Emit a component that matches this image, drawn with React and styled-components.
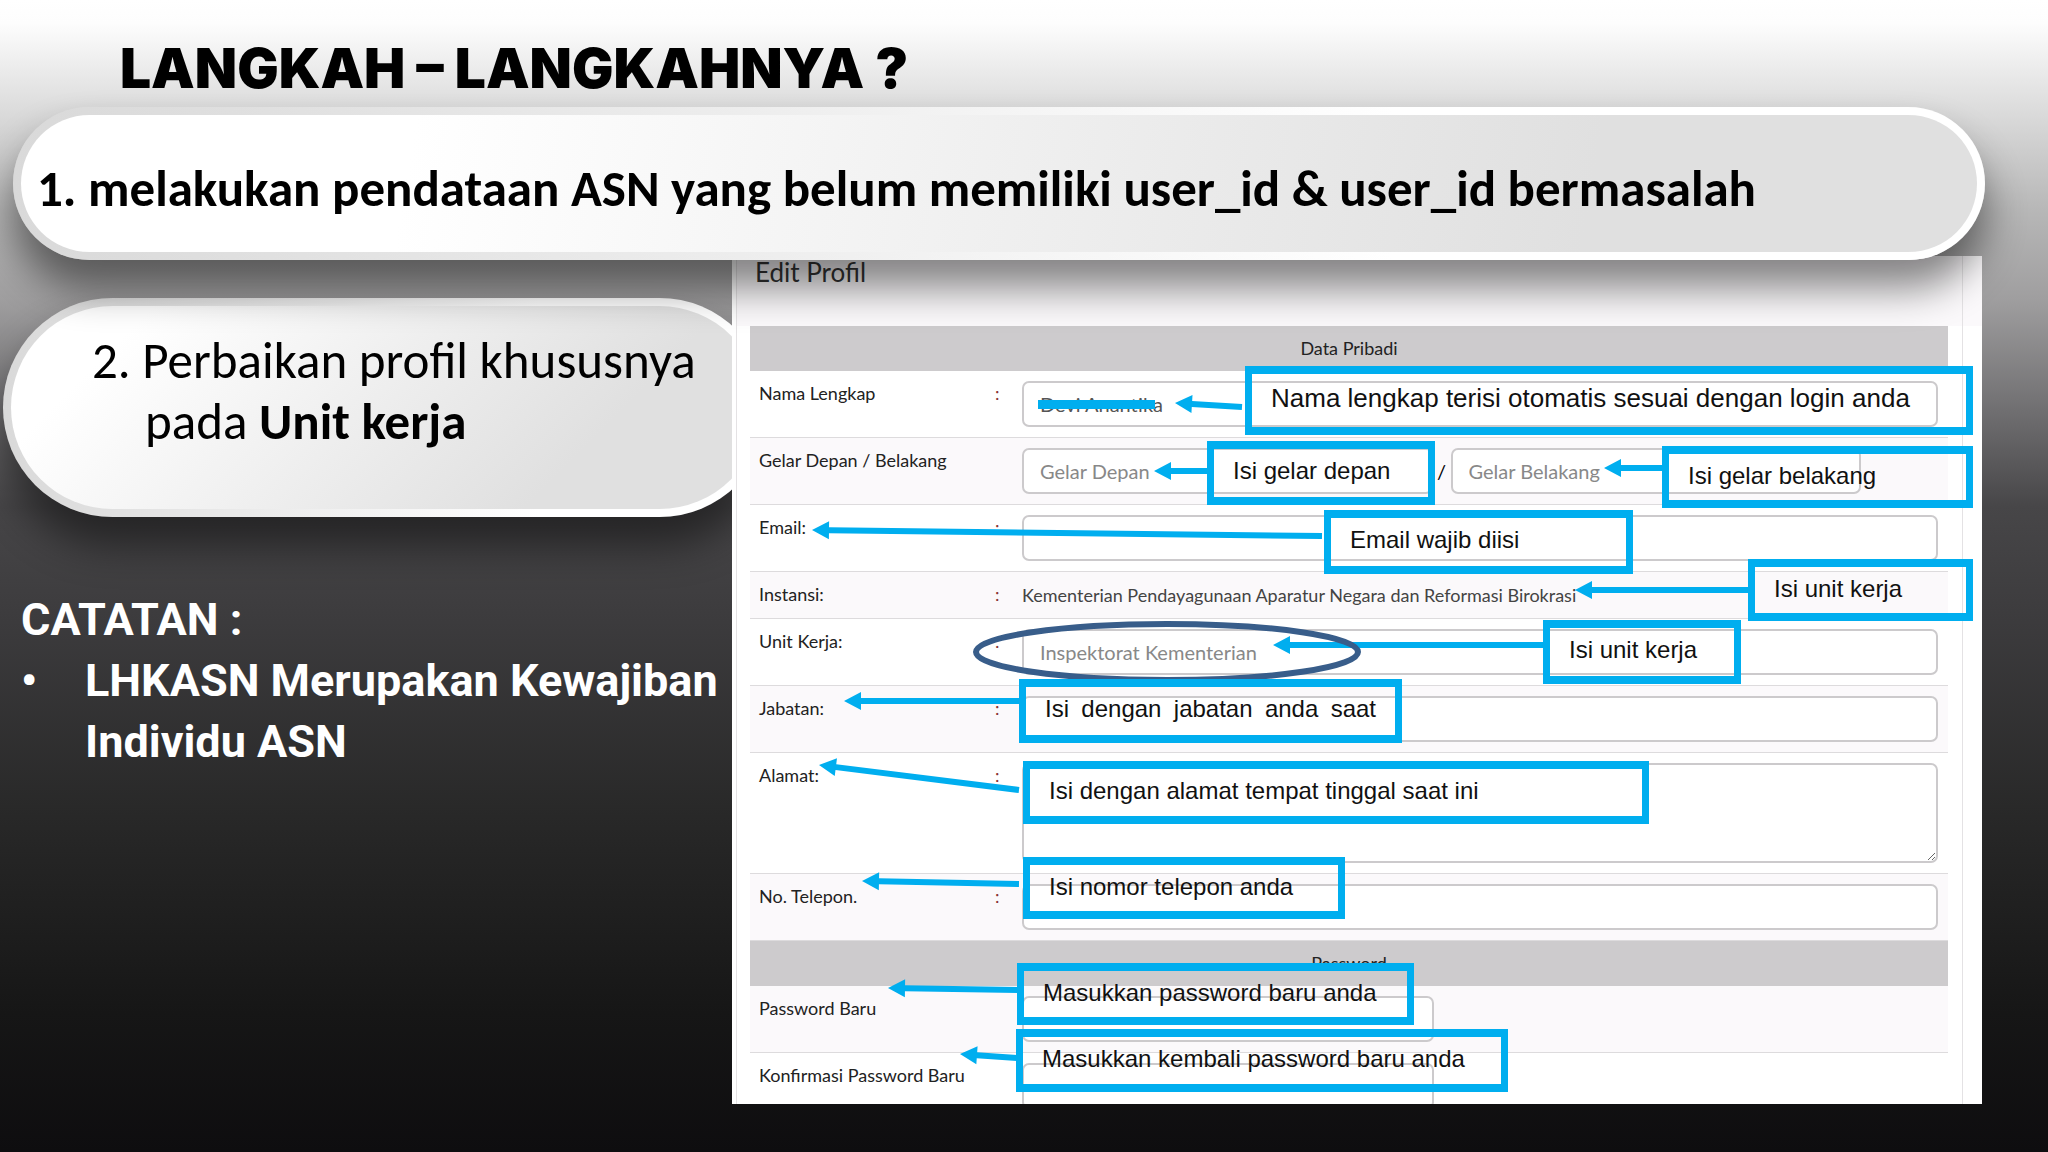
import React from 'react';
import styled, { createGlobalStyle } from 'styled-components';

const notes = [
  { text: 'Nama lengkap terisi otomatis sesuai dengan login anda', x: 513, y: 110, w: 728, h: 69, large: true },
  { text: 'Isi gelar depan', x: 475, y: 185, w: 228, h: 64 },
  { text: 'Isi gelar belakang', x: 930, y: 190, w: 311, h: 62 },
  { text: 'Email wajib diisi', x: 592, y: 254, w: 309, h: 64 },
  { text: 'Isi unit kerja', x: 1016, y: 303, w: 225, h: 62 },
  { text: 'Isi unit kerja', x: 811, y: 364, w: 198, h: 64 },
  { text: 'Isi dengan jabatan anda saat', x: 287, y: 423, w: 383, h: 64, justify: true },
  { text: 'Isi dengan alamat tempat tinggal saat ini', x: 291, y: 505, w: 626, h: 63 },
  { text: 'Isi nomor telepon anda', x: 291, y: 601, w: 322, h: 62 },
  { text: 'Masukkan password baru anda', x: 285, y: 707, w: 397, h: 62 },
  { text: 'Masukkan kembali password baru anda', x: 284, y: 773, w: 492, h: 63 },
];

// from the note box to the tip of the arrow
const arrows = [
  { from: [510, 151], to: [443, 147] },
  { from: [476, 215], to: [422, 215] },
  { from: [931, 212], to: [872, 212] },
  { from: [590, 280], to: [80, 274] },
  { from: [1017, 334], to: [843, 334] },
  { from: [812, 389], to: [541, 389] },
  { from: [288, 445], to: [112, 445] },
  { from: [287, 534], to: [87, 509] },
  { from: [287, 628], to: [130, 625] },
  { from: [286, 734], to: [156, 732] },
  { from: [285, 802], to: [228, 798] },
];

const Arrow = ({ from, to }) => {
  const dx = to[0] - from[0];
  const dy = to[1] - from[1];
  const length = Math.hypot(dx, dy);
  const angle = (Math.atan2(dy, dx) * 180) / Math.PI;

  return (
    <g transform={`translate(${from[0]} ${from[1]}) rotate(${angle})`}>
      <path d={`M0 -3H${length - 17}V-9L${length} 0L${length - 17} 9V3H0Z`} />
    </g>
  );
};

const Field = ({ id, label, colon = true, children }) => (
  <FieldRow>
    <Label htmlFor={id}>{label}</Label>
    <Colon>{colon && ':'}</Colon>
    <Control>{children}</Control>
  </FieldRow>
);

const App = () => {
  return (
    <Slide>
      <GlobalStyle />
      <Title>LANGKAH – LANGKAHNYA ?</Title>

      <StepOne>1. melakukan pendataan ASN yang belum memiliki user_id &amp; user_id bermasalah</StepOne>

      <Body>
        <Aside>
          <StepTwo>
            2. Perbaikan profil khususnya
            <Indent>
              pada <b>Unit kerja</b>
            </Indent>
          </StepTwo>

          <Remarks>
            <RemarksTitle>CATATAN :</RemarksTitle>
            <RemarksList>
              <li>LHKASN Merupakan Kewajiban Individu ASN</li>
            </RemarksList>
          </Remarks>
        </Aside>

        <Panel>
          <PanelTitle>Edit Profil</PanelTitle>
          <Form>
            <Section>Data Pribadi</Section>
            <Field id="nama" label="Nama Lengkap">
              <Input id="nama" defaultValue="Devi Anantika" />
            </Field>
            <Field id="depan" label="Gelar Depan / Belakang" colon={false}>
              <Input id="depan" placeholder="Gelar Depan" />
              <Slash>/</Slash>
              <Input id="belakang" aria-label="Gelar Belakang" placeholder="Gelar Belakang" />
              <Spacer />
            </Field>
            <Field id="email" label="Email:">
              <Input id="email" type="email" />
            </Field>
            <Field id="instansi" label="Instansi:">
              <Output id="instansi">Kementerian Pendayagunaan Aparatur Negara dan Reformasi Birokrasi</Output>
            </Field>
            <Field id="unit" label="Unit Kerja:">
              <Input id="unit" placeholder="Inspektorat Kementerian" />
            </Field>
            <Field id="jabatan" label="Jabatan:">
              <Input id="jabatan" />
            </Field>
            <Field id="alamat" label="Alamat:">
              <TextArea id="alamat" />
            </Field>
            <Field id="telepon" label="No. Telepon.">
              <Input id="telepon" type="tel" />
            </Field>
            <Section>Password</Section>
            <Field id="password" label="Password Baru" colon={false}>
              <Input id="password" type="password" $width={412} />
            </Field>
            <Field id="konfirmasi" label="Konfirmasi Password Baru" colon={false}>
              <Input id="konfirmasi" type="password" $width={412} />
            </Field>
          </Form>

          <Drawing aria-hidden="true">
            <g fill="#00aeef">
              <rect x="306" y="144" width="117" height="9" />
              {arrows.map((arrow, index) => (
                <Arrow key={index} {...arrow} />
              ))}
            </g>
            <ellipse cx="435" cy="396" rx="191" ry="28" fill="none" stroke="#385d8a" strokeWidth="6" />
          </Drawing>
          {notes.map((note, index) => (
            <Note key={index} $x={note.x} $y={note.y} $w={note.w} $h={note.h} $large={note.large} $justify={note.justify}>
              {note.text}
            </Note>
          ))}
        </Panel>
      </Body>
    </Slide>
  );
};

export default App;

const GlobalStyle = createGlobalStyle`
  body {
    margin: 0;
  }
  * {
    box-sizing: border-box;
  }
`;

const Slide = styled.main`
  min-height: 100vh;
  padding-bottom: 48px;
  overflow: hidden;
  background: linear-gradient(
    #ffffff 0,
    #fdfdfd 2%,
    #dedede 9%,
    #b8b8b8 18%,
    #9f9e9f 26%,
    #737274 35%,
    #474648 44%,
    #3c3b3d 54%,
    #292929 70%,
    #161616 88%,
    #0e0d0f 100%
  );
`;

const Title = styled.h1`
  margin: 0;
  padding: 36px 120px 7px;
  font: 900 55px/64px Inter, sans-serif;
  font-optical-sizing: none;
  color: #000;
`;

const Pill = styled.section`
  position: relative;
  border: 8px solid transparent;
  box-shadow: 0 28px 40px rgba(0, 0, 0, 0.48);
  color: #000;
`;

const StepOne = styled(Pill)`
  z-index: 2;
  display: flex;
  align-items: center;
  height: 153px;
  margin: 0 63px 0 13px;
  padding: 10px 16px 0;
  border-radius: 77px;
  background: linear-gradient(100deg, #fff 20%, #e0e0e0 80%) padding-box,
    linear-gradient(90deg, #d9d9d9, #fff 70%) border-box;
  font: bold 51px/60px Carlito, Lato, sans-serif;
`;

const Body = styled.div`
  display: flex;
  margin-top: -4px;
`;

const Aside = styled.aside`
  width: 732px;
  padding-top: 42px;
`;

const StepTwo = styled(Pill)`
  width: 766px;
  height: 219px;
  margin-left: 3px;
  padding: 24px 40px 24px 81px;
  border-radius: 110px;
  background: linear-gradient(135deg, #fff 15%, #e0e0e0 75%) padding-box,
    linear-gradient(90deg, #d9d9d9, #fff 70%) border-box;
  font: 51px/61px Carlito, Lato, sans-serif;
`;

const Indent = styled.div`
  padding-left: 53px;
`;

const Remarks = styled.section`
  margin: 72px 0 0 21px;
  font: bold 45px/61px Roboto, sans-serif;
  color: #fff;
`;

const RemarksTitle = styled.h2`
  margin: 0;
  font: inherit;
`;

const RemarksList = styled.ul`
  margin: 0;
  padding-left: 64px;
  list-style: none;

  li::before {
    content: '•';
    float: left;
    margin-left: -64px;
  }
`;

const Panel = styled.section`
  position: relative;
  z-index: 1;
  flex: 1;
  height: 848px;
  margin-right: 66px;
  padding: 0 34px 0 18px;
  overflow: hidden;
  background: linear-gradient(#fbf9fb, #fbf9fb) 0 0 / 100% 70px no-repeat, #fff;
  border-left: 4px solid #fff;
  font-family: Lato, sans-serif;

  &::before {
    content: '';
    position: absolute;
    inset: 0 19px 0 0;
    border: solid #e4e2e4;
    border-width: 0 1px;
  }
`;

const PanelTitle = styled.h2`
  margin: 0;
  padding: 0 1px;
  height: 70px;
  font-size: 26px;
  font-weight: normal;
  line-height: 32px;
  color: #333;
`;

const Form = styled.form`
  position: relative;
  margin-left: -4px;
`;

const Section = styled.h3`
  margin: 0;
  height: 45px;
  background: #cdcbcd;
  font-size: 18px;
  font-weight: normal;
  line-height: 45px;
  text-align: center;
  color: #222;
`;

const FieldRow = styled.div`
  display: grid;
  grid-template-columns: 236px 27px 1fr;
  padding: 10px 10px 10px 9px;
  border-bottom: 1px solid #dddbdd;
  background: #fff;

  &:nth-child(odd) {
    background: #fbf9fb;
  }
`;

const Label = styled.label`
  font-size: 18px;
  line-height: 24px;
  color: #222;
`;

const Colon = styled.span`
  font-size: 18px;
  line-height: 24px;
  color: #833;
`;

const Control = styled.div`
  display: flex;
  align-items: flex-start;
`;

const Input = styled.input`
  flex: ${({ $width }) => ($width ? 'none' : '1')};
  width: ${({ $width }) => ($width ? `${$width}px` : 'auto')};
  min-width: 0;
  height: 46px;
  padding: 0 16px;
  border: 2px solid #cccacc;
  border-radius: 7px;
  background: #fff;
  font: 20px Lato, sans-serif;
  color: #555;

  &::placeholder {
    color: #888;
    opacity: 1;
  }
`;

const TextArea = styled.textarea`
  flex: 1;
  height: 100px;
  border: 2px solid #cccacc;
  border-radius: 7px;
  background: #fff;
`;

const Output = styled.output`
  font-size: 18px;
  line-height: 26px;
  color: #444;
`;

const Slash = styled.span`
  width: 18px;
  text-align: center;
  font-size: 20px;
  line-height: 46px;
`;

const Spacer = styled.span`
  width: 77px;
`;

const Drawing = styled.svg`
  position: absolute;
  top: 0;
  left: -4px;
  width: 100%;
  height: 100%;
  overflow: visible;
`;

const Note = styled.p`
  position: absolute;
  top: ${({ $y }) => $y}px;
  left: ${({ $x }) => $x - 4}px;
  width: ${({ $w }) => $w}px;
  height: ${({ $h }) => $h}px;
  margin: 0;
  padding: 8px 19px;
  border: solid #00aeef;
  border-width: 8px 7px;
  font: ${({ $large }) => ($large ? '26px/32px' : '24px/28px')} 'Liberation Sans', sans-serif;
  text-align-last: ${({ $justify }) => ($justify ? 'justify' : 'left')};
  white-space: nowrap;
  color: #111;
`;
